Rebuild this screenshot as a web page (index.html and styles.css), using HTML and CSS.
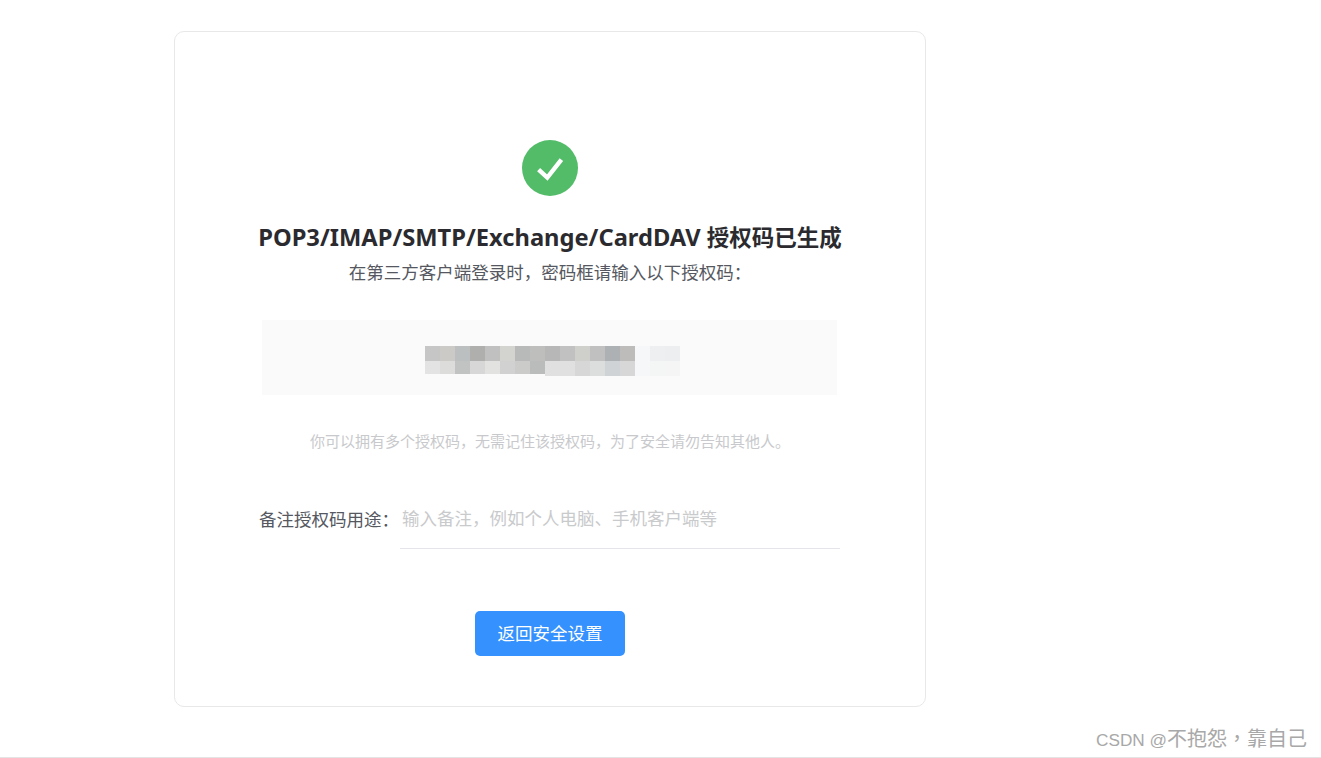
FILE: index.html
```html
<!DOCTYPE html>
<html lang="zh-CN">
<head>
  <title>授权码已生成</title>
  <meta charset="UTF-8">
  <meta name="viewport" content="width=device-width, initial-scale=1.0">
  <link rel="stylesheet" href="styles.css">
</head>
<body>
  <div class="page">
    <div class="card">
      <svg class="success-icon" viewBox="0 0 56 56" width="56" height="56" aria-hidden="true">
        <circle cx="28" cy="28" r="28" fill="#52bc69"></circle>
        <path d="M16.6 29.6 L25.3 37.6 L39.4 19.6" fill="none" stroke="#fff" stroke-width="4.4"></path>
      </svg>
      <h1 class="title">POP3/IMAP/SMTP/Exchange/CardDAV <span class="title-cjk">授权码已生成</span></h1>
      <p class="subtitle">在第三方客户端登录时，密码框请输入以下授权码：</p>
      <div class="code-box">
        <div class="mosaic">
          <div class="mosaic-row mosaic-top"></div>
          <div class="mosaic-row mosaic-bottom"></div>
        </div>
      </div>
      <p class="hint">你可以拥有多个授权码，无需记住该授权码，为了安全请勿告知其他人。</p>
      <form class="note-form">
        <label class="note-label" for="note">备注授权码用途：</label>
        <input class="note-input" type="text" id="note" name="note" placeholder="输入备注，例如个人电脑、手机客户端等">
      </form>
      <button class="back-button" type="button">返回安全设置</button>
    </div>
  </div>
  <div class="watermark" lang="zh-TW"><span class="watermark-latin">CSDN @</span>不抱怨，靠自己</div>
</body>
</html>
```

FILE: styles.css
```css
html, body {
  margin: 0;
  padding: 0;
}

body {
  height: 758px;
  overflow: hidden;
  background-color: #fff;
  font-family: "Noto Sans", "Noto Sans CJK SC", sans-serif;
  position: relative;
}

.page {
  box-sizing: border-box;
  height: 758px;
  padding: 31px 0 0 174px;
  border-bottom: 1px solid #e4e4e4;
}

.card {
  box-sizing: border-box;
  width: 752px;
  height: 676px;
  padding-top: 108px;
  border: 1px solid #e8e8e8;
  border-radius: 10px;
  display: flex;
  flex-direction: column;
  align-items: center;
}

.success-icon {
  display: block;
}

.title {
  margin: 23px 0 0;
  font-size: 23.7px;
  line-height: 36px;
  font-weight: 700;
  color: #2b2b2f;
  white-space: nowrap;
}

.title-cjk {
  font-size: 22.5px;
}

.subtitle {
  margin: 1px 0 0;
  font-size: 17.5px;
  line-height: 30px;
  color: #555860;
}

.code-box {
  box-sizing: border-box;
  width: 575px;
  height: 75px;
  margin: 33px 2px 0 0;
  padding: 26px 0 0 6px;
  background-color: #fafafa;
  display: flex;
  justify-content: center;
}

.mosaic {
  width: 255px;
}

.mosaic-row {
  height: 15px;
}

.mosaic-top {
  background: linear-gradient(90deg,
    #c6c6c6 0 15px, #cbcac6 15px 30px, #bcbfbf 30px 45px, #afafad 45px 60px,
    #c0c0c1 60px 75px, #d3d4cf 75px 90px, #b8baba 90px 105px, #bebebd 105px 120px,
    #b7b7b8 120px 135px, #c1c1c2 135px 150px, #cfd0cb 150px 165px, #c0c0c1 165px 180px,
    #adb1b3 180px 195px, #bdbcba 195px 210px, #f6f7f8 210px 225px, #eeeff1 225px 240px,
    #eceef0 240px 255px);
}

.mosaic-bottom {
  background:
    linear-gradient(#fafafa, #fafafa) 0 100% / 120px 2px no-repeat,
    linear-gradient(90deg,
    #e3e3e3 0 15px, #dcdcda 15px 30px, #c1c2c2 30px 45px, #d7d7d8 45px 60px,
    #e2e2e0 60px 75px, #d1d1d2 75px 90px, #cbcbc9 90px 105px, #babcbc 105px 120px,
    #e0e0e0 120px 150px, #d7d7d8 150px 165px, #dcdede 165px 180px,
    #d0d3d5 180px 195px, #d8d7d8 195px 210px, #f6f7f8 210px 225px, #f4f5f5 225px 240px,
    #f5f5f6 240px 255px);
}

.hint {
  margin: 35px 0 0;
  font-size: 15px;
  line-height: 22px;
  color: #c8c9cc;
}

.note-form {
  width: 582px;
  margin-top: 37px;
  display: flex;
  align-items: center;
  justify-content: space-between;
}

.note-label {
  flex: none;
  font-size: 17.5px;
  line-height: 30px;
  color: #55585f;
  white-space: nowrap;
}

.note-input {
  flex: none;
  box-sizing: border-box;
  width: 440px;
  height: 60px;
  margin-right: 1px;
  padding: 0 2px 2px;
  border: none;
  border-bottom: 1px solid #e4e5ea;
  outline: none;
  font-family: inherit;
  font-size: 17.5px;
  color: #55585f;
}

.note-input::placeholder {
  color: #c9cacc;
  opacity: 1;
}

.back-button {
  width: 150px;
  height: 45px;
  margin-top: 62px;
  padding: 0 0 2px;
  border: none;
  border-radius: 5px;
  background-color: #3491fd;
  color: #fff;
  font-family: inherit;
  font-size: 17.5px;
  cursor: pointer;
}

.watermark {
  position: absolute;
  top: 725px;
  right: 14px;
  font-family: "Liberation Sans", "Noto Sans CJK TC", sans-serif;
  font-size: 20px;
  line-height: 28px;
  color: #a8a8a8;
  white-space: nowrap;
}

.watermark-latin {
  font-size: 17.2px;
}
```
